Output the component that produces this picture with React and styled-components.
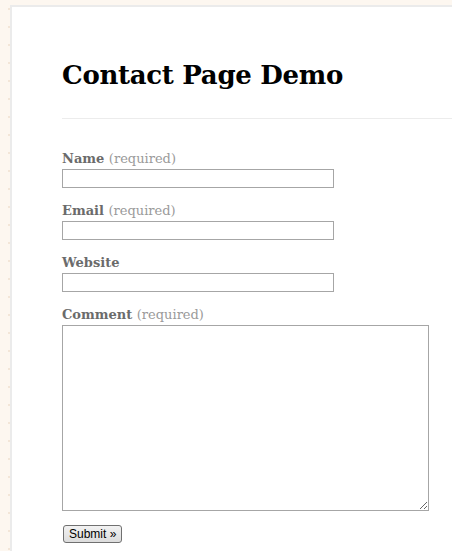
import styled, { createGlobalStyle } from 'styled-components';

const GlobalStyle = createGlobalStyle`
  html, body {
    margin: 0;
    padding: 0;
    background: #fdf7f0;
  }
  body {
    background-image: radial-gradient(#f3e6d8 1px, transparent 1.4px);
    background-size: 18px 18px;
  }
`;

const Page = styled.div`
  padding: 5px 0 0 10px;
  height: 551px;
  box-sizing: border-box;
  overflow: hidden;
`;

const Card = styled.div`
  background: #fff;
  border-top: 2px solid #ebebeb;
  border-left: 2px solid #ebebeb;
  padding: 48px 0 4px 50px;
  height: 100%;
  box-sizing: border-box;
`;

const Title = styled.h1`
  margin: 0;
  font-family: 'DejaVu Serif', 'Liberation Serif', serif;
  font-weight: bold;
  font-size: 26px;
  line-height: 40px;
  color: #000;
  letter-spacing: -0.3px;
`;

const Divider = styled.hr`
  margin: 23px 0 0;
  border: none;
  border-top: 1px solid #ececec;
`;

const Form = styled.form`
  display: flex;
  flex-direction: column;
  padding-top: 31px;
`;

const Field = styled.div`
  display: flex;
  flex-direction: column;
  margin-bottom: 14px;
`;

const Label = styled.label`
  font-family: 'DejaVu Serif', 'Liberation Serif', serif;
  font-size: 13px;
  line-height: 17px;
  font-weight: bold;
  color: #6b6b6b;
  margin-bottom: 2px;
`;

const Hint = styled.span`
  font-weight: normal;
  color: #9a9a9a;
`;

const Input = styled.input`
  width: 272px;
  height: 19px;
  box-sizing: border-box;
  border: 1px solid #a6a6a6;
  margin: 0;
  padding: 1px 2px;
`;

const TextArea = styled.textarea`
  width: 367px;
  height: 186px;
  box-sizing: border-box;
  border: 1px solid #a6a6a6;
  margin: 0;
  padding: 2px;
`;

const Submit = styled.button`
  align-self: flex-start;
  margin: 0 0 0 1px;
  height: 18px;
  padding: 0 5px;
  font-family: 'Liberation Sans', Arial, sans-serif;
  font-size: 12px;
  line-height: 14px;
  color: #000;
  border: 1px solid #707070;
  border-radius: 3px;
  background: linear-gradient(#f2f2f2, #dcdcdc);
`;

export default function App() {
  return (
    <>
      <GlobalStyle />
      <Page>
        <Card>
          <Title>Contact Page Demo</Title>
          <Divider />
          <Form onSubmit={(e) => e.preventDefault()}>
            <Field>
              <Label>Name <Hint>(required)</Hint></Label>
              <Input type="text" />
            </Field>
            <Field>
              <Label>Email <Hint>(required)</Hint></Label>
              <Input type="text" />
            </Field>
            <Field>
              <Label>Website</Label>
              <Input type="text" />
            </Field>
            <Field>
              <Label>Comment <Hint>(required)</Hint></Label>
              <TextArea />
            </Field>
            <Submit type="submit">Submit »</Submit>
          </Form>
        </Card>
      </Page>
    </>
  );
}
